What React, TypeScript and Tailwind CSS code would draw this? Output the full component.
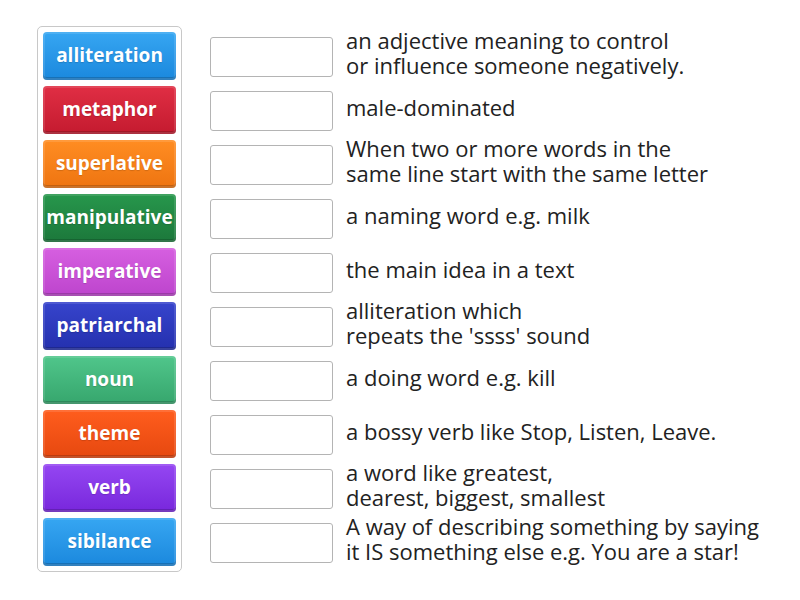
import React from "react";

const terms: { label: string; cls: string }[] = [
  { label: "alliteration", cls: "bg-gradient-to-b from-[#36a6f2] to-[#1a88dd]" },
  { label: "metaphor", cls: "bg-gradient-to-b from-[#e02e44] to-[#c41a2f]" },
  { label: "superlative", cls: "bg-gradient-to-b from-[#ff8d22] to-[#ee7410]" },
  { label: "manipulative", cls: "bg-gradient-to-b from-[#27974c] to-[#1c783b]" },
  { label: "imperative", cls: "bg-gradient-to-b from-[#d65fe0] to-[#bd44cd]" },
  { label: "patriarchal", cls: "bg-gradient-to-b from-[#3744cc] to-[#2430ae]" },
  { label: "noun", cls: "bg-gradient-to-b from-[#50c68b] to-[#36a66d]" },
  { label: "theme", cls: "bg-gradient-to-b from-[#ff5d1d] to-[#e6480f]" },
  { label: "verb", cls: "bg-gradient-to-b from-[#9546f2] to-[#7826dc]" },
  { label: "sibilance", cls: "bg-gradient-to-b from-[#36a6f2] to-[#1a88dd]" },
];

const defs: string[][] = [
  ["an adjective meaning to control", "or influence someone negatively."],
  ["male-dominated"],
  ["When two or more words in the", "same line start with the same letter"],
  ["a naming word e.g. milk"],
  ["the main idea in a text"],
  ["alliteration which", "repeats the 'ssss' sound"],
  ["a doing word e.g. kill"],
  ["a bossy verb like Stop, Listen, Leave."],
  ["a word like greatest,", "dearest, biggest, smallest"],
  ["A way of describing something by saying", "it IS something else e.g. You are a star!"],
];

export default function App() {
  return (
    <div
      className="w-[800px] h-[600px] bg-white flex items-start pl-[37px] pt-[26px]"
      style={{ fontFamily: '"Open Sans", "Liberation Sans", sans-serif' }}
    >
      <div className="border border-[#c8c8c8] rounded-[5px] p-[5px] flex flex-col gap-[6px] w-[145px]">
        {terms.map((t) => (
          <div
            key={t.label}
            className={`${t.cls} h-[48px] rounded-[4px] flex items-center justify-center text-white font-bold text-[19px] leading-none shadow-[inset_0_0_0_2px_rgba(255,255,255,0.12),inset_0_-3px_0_rgba(0,0,0,0.18)] [text-shadow:0_1px_1px_rgba(0,0,0,0.15)]`}
          >
            <span className="pb-[2px]">{t.label}</span>
          </div>
        ))}
      </div>
      <div className="ml-[28px] mt-[6px] flex flex-col">
        {defs.map((lines, i) => (
          <div key={i} className="h-[54px] flex items-start">
            <div className="w-[123px] h-[40px] mt-[5px] border border-[#b4b4b4] rounded-[3px] bg-white shrink-0" />
            <div className="ml-[13px] h-[48px] flex items-center">
              <div className="mb-[6px] text-[22px] leading-[25px] text-[#222222] whitespace-nowrap">
                {lines.map((l, j) => (
                  <div key={j}>{l}</div>
                ))}
              </div>
            </div>
          </div>
        ))}
      </div>
    </div>
  );
}
